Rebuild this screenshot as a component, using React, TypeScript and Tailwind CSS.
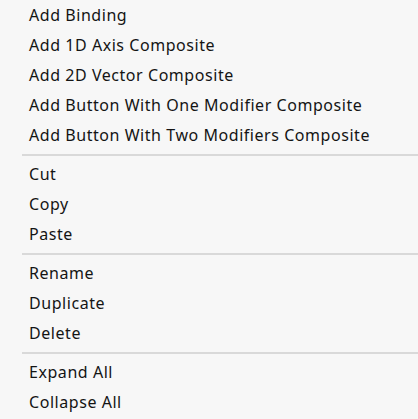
import React from "react";

const groups: string[][] = [
  [
    "Add Binding",
    "Add 1D Axis Composite",
    "Add 2D Vector Composite",
    "Add Button With One Modifier Composite",
    "Add Button With Two Modifiers Composite",
  ],
  ["Cut", "Copy", "Paste"],
  ["Rename", "Duplicate", "Delete"],
  ["Expand All", "Collapse All"],
];

export default function App() {
  return (
    <div
      className="w-[418px] h-[419px] overflow-hidden bg-[#f7f7f7] text-[#141414] text-[16px] tracking-[0.55px]"
      style={{ fontFamily: '"Noto Sans", "Open Sans", sans-serif' }}
    >
      {groups.map((g, gi) => (
        <div key={gi}>
          {gi > 0 && (
            <div className="h-[9px] flex items-center pl-[22px]">
              <div className="h-[2px] w-full bg-[#d9d9d9]" />
            </div>
          )}
          {g.map((item) => (
            <div key={item} className="h-[30px] flex items-center pl-[29px] leading-none">
              {item}
            </div>
          ))}
        </div>
      ))}
    </div>
  );
}
